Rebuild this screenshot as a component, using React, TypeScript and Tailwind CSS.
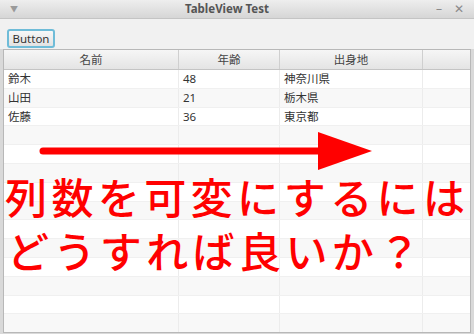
import React from 'react'

const people = [
  { name: '鈴木', age: '48', from: '神奈川県' },
  { name: '山田', age: '21', from: '栃木県' },
  { name: '佐藤', age: '36', from: '東京都' },
]

const ROWS = 14

export default function App() {
  const rows = Array.from({ length: ROWS }, (_, i) => people[i] ?? null)

  return (
    <div className="relative w-[474px] h-[334px] overflow-hidden bg-[#d9d9d9] font-['Noto_Sans','Noto_Sans_CJK_JP',sans-serif]">
      {/* title bar */}
      <div className="h-[19px] flex items-center px-[10px] bg-gradient-to-b from-[#eeeeee] to-[#d6d6d6] border-b border-[#c4c4c4]">
        <span className="text-[8px] text-[#9a9a9a] leading-none">▼</span>
        <span className="flex-1 text-center text-[11.5px] font-bold text-[#555555] leading-none">TableView Test</span>
        <span className="text-[12px] text-[#8a8a8a] leading-none mr-[12px]">–</span>
        <span className="text-[12px] text-[#8a8a8a] leading-none">✕</span>
      </div>

      {/* toolbar */}
      <div className="h-[30px] bg-[#f1f1f1] pl-[7px] pt-[6px]">
        <button className="w-[48px] h-[19px] rounded-[3px] border-2 border-[#6fbcd8] bg-gradient-to-b from-[#f8f8f8] to-[#e2e2e2] text-[11.5px] text-[#333333] leading-none">
          Button
        </button>
      </div>

      {/* table */}
      <div className="mx-[3px] w-[468px] h-[284px] border border-[#b8b8b8] bg-white overflow-hidden">
        <div className="flex h-[20px] bg-gradient-to-b from-[#f6f6f6] to-[#e4e4e4] border-b border-[#c4c4c4] text-[11.5px] text-[#444444]">
          <div className="w-[175px] flex items-center justify-center border-r border-[#cfcfcf]">名前</div>
          <div className="w-[101px] flex items-center justify-center border-r border-[#cfcfcf]">年齢</div>
          <div className="w-[143px] flex items-center justify-center border-r border-[#cfcfcf]">出身地</div>
          <div className="flex-1" />
        </div>
        {rows.map((p, i) => (
          <div
            key={i}
            className={`flex h-[18.8px] text-[11.5px] text-[#333333] border-b border-[#f0f0f0] ${i % 2 ? 'bg-[#f8f8f8]' : 'bg-white'}`}
          >
            <div className="w-[175px] flex items-center pl-[4px] border-r border-[#ececec]">{p?.name}</div>
            <div className="w-[101px] flex items-center pl-[4px] border-r border-[#ececec]">{p?.age}</div>
            <div className="w-[143px] flex items-center pl-[4px] border-r border-[#ececec]">{p?.from}</div>
            <div className="flex-1" />
          </div>
        ))}
      </div>

      {/* red overlay */}
      <svg className="absolute left-0 top-0" width="474" height="334" viewBox="0 0 474 334">
        <line x1="43" y1="151" x2="326" y2="151" stroke="#ff0000" strokeWidth="7" strokeLinecap="round" />
        <polygon points="318,132 372,151 318,170" fill="#ff0000" />
      </svg>
      <div className="absolute left-[5px] top-[175px] flex flex-col gap-[12px] text-[42px] leading-[42px] tracking-[4.4px] font-medium text-[#ff0000] whitespace-nowrap font-['Noto_Sans_CJK_JP',sans-serif]">
        <div>列数を可変にするには</div>
        <div className="pl-[2px]">どうすれば良いか？</div>
      </div>
    </div>
  )
}
